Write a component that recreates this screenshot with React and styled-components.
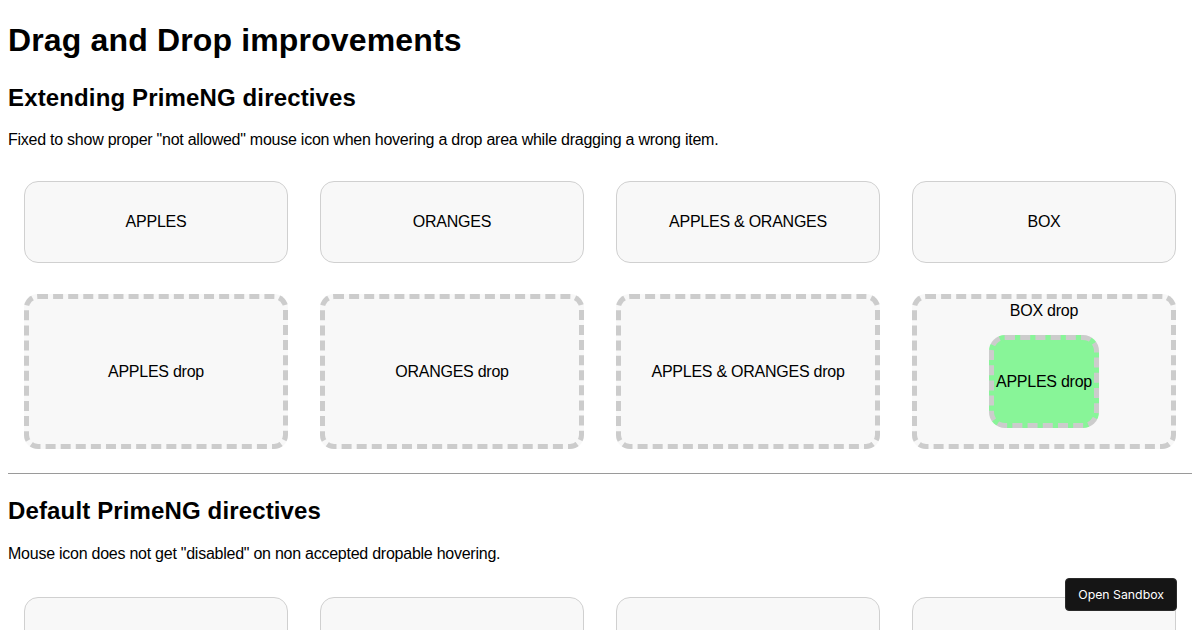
import React from "react";
import styled, { createGlobalStyle } from "styled-components";

const Global = createGlobalStyle`
  html, body { background: #fff; }
  body {
    margin: 0;
    font-family: "Liberation Sans", Arial, sans-serif;
    color: #000;
  }
`;

const Page = styled.div`
  padding: 0 8px;
  display: flow-root;
`;

const Title = styled.h1`
  font-size: 32px;
  font-weight: bold;
  letter-spacing: 0.15px;
  margin: 22px 0 24.5px;
`;

const SectionTitle = styled.h2`
  font-size: 24px;
  font-weight: bold;
  letter-spacing: 0.14px;
  margin: ${(p) => p.$top || "19.92px"} 0 19.92px;
`;

const Text = styled.p`
  font-size: 16px;
  letter-spacing: -0.25px;
  margin: 16px 0;
`;

const Grid = styled.div`
  display: grid;
  grid-template-columns: repeat(4, 1fr);
  column-gap: 32px;
  row-gap: 31px;
  padding: ${(p) => p.$padTop || "16px"} 16px 16px;
`;

const Card = styled.div`
  height: 82px;
  box-sizing: border-box;
  border: 1px solid #d0d0d0;
  border-radius: 14px;
  background: #f8f8f8;
  display: flex;
  align-items: center;
  justify-content: center;
  font-size: 16px;
  letter-spacing: -0.25px;
`;

const Drop = styled.div`
  height: 155px;
  box-sizing: border-box;
  border: 5px dashed #cccccc;
  border-radius: 14px;
  background: #f8f8f8;
  display: flex;
  flex-direction: column;
  align-items: center;
  justify-content: ${(p) => (p.$nested ? "flex-start" : "center")};
  padding-top: ${(p) => (p.$nested ? "3px" : "0")};
  gap: 15px;
  font-size: 16px;
  letter-spacing: -0.25px;
`;

const InnerDrop = styled.div`
  width: 110px;
  height: 93px;
  box-sizing: border-box;
  border: 5px dashed #cccccc;
  border-radius: 16px;
  background: #88f598;
  display: flex;
  align-items: center;
  justify-content: center;
  white-space: nowrap;
  font-size: 16px;
`;

const Rule = styled.hr`
  margin: 8px 0;
  border: none;
  border-top: 1px solid #9a9a9a;
  height: 0;
`;

const SandboxButton = styled.button`
  position: fixed;
  right: 23px;
  bottom: 19px;
  height: 33px;
  padding: 0 12px;
  background: #151515;
  color: #fff;
  border: 1px solid #2a2a2a;
  border-radius: 4px;
  font-family: Inter, "Liberation Sans", sans-serif;
  font-size: 12.3px;
  cursor: pointer;
`;

const items = ["APPLES", "ORANGES", "APPLES & ORANGES", "BOX"];

export default function App() {
  return (
    <Page>
      <Global />
      <Title>Drag and Drop improvements</Title>
      <SectionTitle>Extending PrimeNG directives</SectionTitle>
      <Text>
        Fixed to show proper "not allowed" mouse icon when hovering a drop area
        while dragging a wrong item.
      </Text>
      <Grid>
        {items.map((i) => (
          <Card key={i}>{i}</Card>
        ))}
        <Drop>APPLES drop</Drop>
        <Drop>ORANGES drop</Drop>
        <Drop>APPLES &amp; ORANGES drop</Drop>
        <Drop $nested>
          BOX drop
          <InnerDrop>APPLES drop</InnerDrop>
        </Drop>
      </Grid>
      <Rule />
      <SectionTitle $top="23px">Default PrimeNG directives</SectionTitle>
      <Text>
        Mouse icon does not get "disabled" on non accepted dropable hovering.
      </Text>
      <Grid $padTop="18px">
        {items.map((i) => (
          <Card key={"d" + i}>{i}</Card>
        ))}
      </Grid>
      <SandboxButton>Open Sandbox</SandboxButton>
    </Page>
  );
}
